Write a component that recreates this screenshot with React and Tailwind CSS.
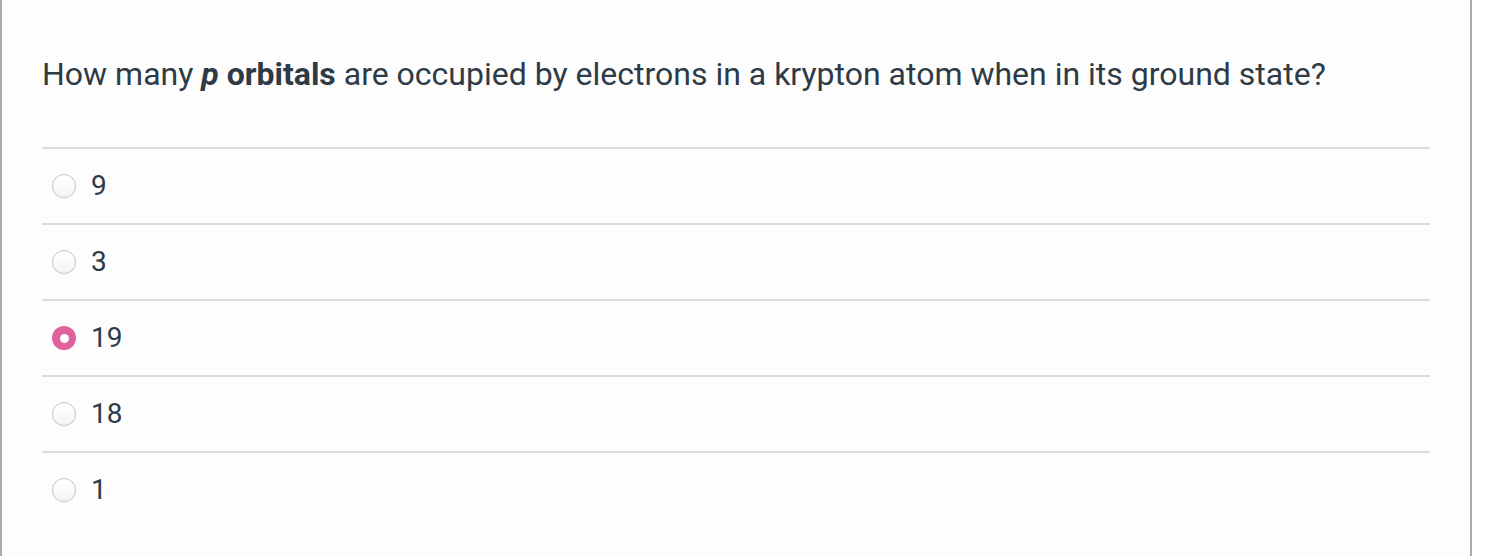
const options = [
    {id: 1, label: "9"},
    {id: 2, label: "3"},
    {id: 3, label: "19"},
    {id: 4, label: "18"},
    {id: 5, label: "1"},
];

const Radio = ({checked}) => {
    if (checked) {
        return (
            <span className="flex h-[24px] w-[24px] shrink-0 items-center justify-center rounded-full bg-[#e0619b]">
                <span className="h-[9px] w-[9px] rounded-full bg-white" />
            </span>
        );
    }
    return (
        <span className="h-[24px] w-[24px] shrink-0 rounded-full border border-[#c6c6c6] bg-gradient-to-b from-white to-[#f4f4f4] shadow-[0_1px_1px_rgba(0,0,0,0.06)]" />
    );
};

const App = () => {
    const selected = 3;
    return (
        <div className="flex h-[556px] w-full bg-white font-['Roboto',sans-serif] text-[#2e3b46]">
            <div className="h-full w-[1472px] border-l-2 border-r-2 border-[#ababab] bg-[#fdfdfd] pl-[40px] pr-[40px] pt-[50px]">
                <h1 className="text-[32px] leading-[48px]">
                    How many <b className="italic">p</b> <b>orbitals</b> are occupied by electrons in a krypton atom when in its ground state?
                </h1>
                <ul className="mt-[49px]">
                    {options.map((opt) => (
                        <li
                            key={opt.id}
                            className="flex h-[76px] items-center gap-[15px] border-t-2 border-[#dcdcdc] pl-[10px]"
                        >
                            <Radio checked={opt.id === selected} />
                            <span className="text-[28px]">{opt.label}</span>
                        </li>
                    ))}
                </ul>
            </div>
        </div>
    );
};

export default App;
